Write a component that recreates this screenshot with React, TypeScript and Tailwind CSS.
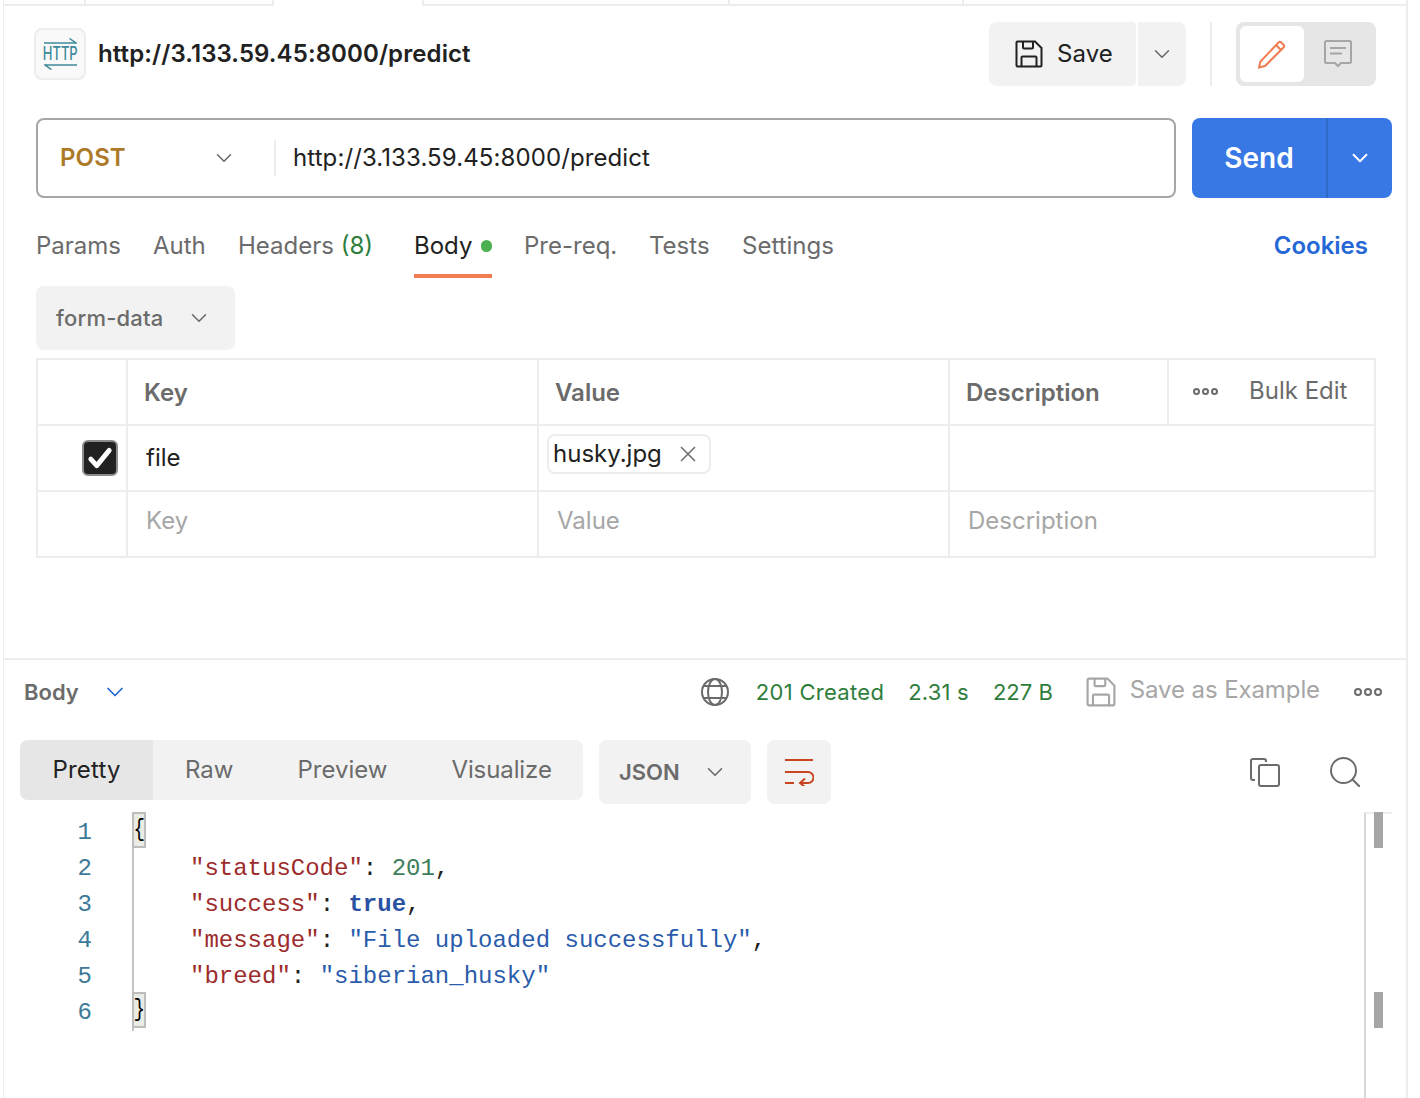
import { ChevronDown } from "lucide-react";

const ui = "font-['Inter','Liberation_Sans',sans-serif]";

const requestTabs = [
  { label: "Params", width: "w-[84px]" },
  { label: "Auth", width: "w-[52px]" },
];

function SaveIcon({ className }: { className?: string }) {
  return (
    <svg viewBox="0 0 28 28" fill="none" stroke="currentColor" strokeWidth="2" className={className}>
      <path d="M1.5 2.5a1 1 0 0 1 1-1H20l6.5 6.5v17.500a1 1 0 0 1-1 1h-23a1 1 0 0 1-1-1z" />
      <path d="M8 1.500v6a1 1 0 0 0 1 1h8a1 1 0 0 0 1-1v-6" />
      <path d="M6.500 26.500v-9a1 1 0 0 1 1-1h13a1 1 0 0 1 1 1v9" />
    </svg>
  );
}

function HttpIcon() {
  return (
    <div className="flex h-[52px] w-[52px] flex-col items-center justify-center rounded-[8px] border-2 border-[#ededed] bg-[#f9f9f9] text-[#3d8a9a]">
      <svg viewBox="0 0 33 6" className="h-[6px] w-[33px]" fill="none" stroke="currentColor" strokeWidth="1.500">
        <path d="M0 5h32L25.500 .5" />
      </svg>
      <span className="my-[1px] scale-x-[0.72] text-[18px] leading-[18px] font-medium">HTTP</span>
      <svg viewBox="0 0 33 6" className="h-[6px] w-[33px]" fill="none" stroke="currentColor" strokeWidth="1.500">
        <path d="M33 1H1l6.500 4.500" />
      </svg>
    </div>
  );
}

function MoreDots({ size }: { size: string }) {
  return (
    <>
      <i className={`${size} rounded-full border-2 border-[#6b6b6b]`} />
      <i className={`${size} rounded-full border-2 border-[#6b6b6b]`} />
      <i className={`${size} rounded-full border-2 border-[#6b6b6b]`} />
    </>
  );
}

function TableCell({ className, children }: { className: string; children?: React.ReactNode }) {
  return <div className={`flex items-center border-r-2 border-[#ededed] last:border-r-0 ${className}`}>{children}</div>;
}

function CodeLine({ children }: { children: React.ReactNode }) {
  return <div className="h-[36px] pt-[3px] pl-[56px]">{children}</div>;
}

function MatchedBrace({ children }: { children: string }) {
  return (
    <div className="-ml-[2px] flex h-[36px] w-[14px] justify-center border-2 border-[#bdbdbd] bg-[#e8ece4] text-[24px] leading-[32px] text-black">
      <span className="scale-x-[0.8]">{children}</span>
    </div>
  );
}

export default function App() {
  return (
    <div className={`${ui} relative h-[1098px] w-[1420px] overflow-hidden bg-white text-[24px] text-[#212121]`}>
      {/* tab strip remnants along the top */}
      <div className="flex h-[6px] pl-[4px]">
        <div className="w-[82px] border-r-2 border-b-2 border-[#ededed]" />
        <div className="w-[188px] border-r-2 border-b-2 border-[#ededed]" />
        <div className="w-[150px] border-r-2 border-[#ededed]" />
        <div className="w-[306px] border-r-2 border-b-2 border-[#ededed]" />
        <div className="w-[234px] border-r-2 border-b-2 border-[#ededed]" />
        <div className="w-[442px] border-b-2 border-[#ededed]" />
      </div>

      <div className="absolute top-0 bottom-0 left-[3px] w-[1px] bg-[#ededed]" />
      <div className="absolute top-0 bottom-0 left-[1406px] w-[2px] bg-[#ededed]" />

      {/* request title */}
      <div className="mt-[16px] flex h-[64px] items-center pr-[44px] pl-[34px]">
        <HttpIcon />
        <div className="ml-[12px] text-[24px] font-semibold tracking-[0.1px]">http://3.133.59.45:8000/predict</div>
        <div className="ml-auto flex h-[64px] w-[147px] items-center gap-[14px] rounded-l-[8px] rounded-r-[4px] bg-[#f2f2f2] pl-[26px]">
          <SaveIcon className="h-[28px] w-[28px]" />
          <span className="text-[24px] tracking-[0.1px]">Save</span>
        </div>
        <div className="ml-[2px] flex h-[64px] w-[48px] items-center justify-center rounded-r-[8px] bg-[#f2f2f2] text-[#6b6b6b]">
          <ChevronDown className="h-[26px] w-[26px]" strokeWidth={1.500} />
        </div>
        <div className="mx-[24px] h-[64px] w-[2px] bg-[#ededed]" />
        <div className="flex h-[64px] w-[140px] rounded-[8px] bg-[#e6e6e6] p-[4px]">
          <div className="flex w-[64px] items-center justify-center rounded-[6px] bg-white text-[#f07c4f]">
            <svg viewBox="0 0 30 30" className="h-[30px] w-[30px]" fill="none" stroke="currentColor" strokeWidth="2">
              <path d="M2 28.500l1.500-6L21.500 3.500a2 2 0 0 1 2.800 0l2.200 2.200a2 2 0 0 1 0 2.800L8 27z M2 28.500l6-1.500 M19 6l5.500 5.500" />
            </svg>
          </div>
          <div className="flex flex-1 items-center justify-center text-[#a6a6a6]">
            <svg viewBox="0 0 28 28" className="h-[28px] w-[28px]" fill="none" stroke="currentColor" strokeWidth="2">
              <path d="M2.500 1h23A1.500 1.500 0 0 1 27 2.500v19a1.500 1.500 0 0 1-1.500 1.500H17l-3 3-3-3H2.500A1.500 1.500 0 0 1 1 21.500v-19A1.500 1.500 0 0 1 2.500 1z" />
              <path d="M6 8h16M6 13.500h12" />
            </svg>
          </div>
        </div>
      </div>

      {/* url bar */}
      <div className="mt-[32px] flex h-[80px] pr-[28px] pl-[36px]">
        <div className="flex flex-1 items-center rounded-[8px] border-2 border-[#a6a6a6]">
          <div className="flex w-[236px] items-center justify-between pr-[37px] pl-[22px]">
            <span className="font-semibold tracking-[0.1px] text-[#ad7a29]">POST</span>
            <ChevronDown className="h-[26px] w-[26px] text-[#6b6b6b]" strokeWidth={1.500} />
          </div>
          <div className="h-[36px] w-[2px] bg-[#ededed]" />
          <div className="ml-[17px] tracking-[0.1px]">http://3.133.59.45:8000/predict</div>
        </div>
        <div className="ml-[16px] flex w-[200px] rounded-[8px] bg-[#3878e4] text-white">
          <div className="flex w-[136px] items-center justify-center border-r-2 border-[#2f6ac9] text-[28px] font-semibold">Send</div>
          <div className="flex flex-1 items-center justify-center">
            <ChevronDown className="h-[26px] w-[26px]" strokeWidth={1.750} />
          </div>
        </div>
      </div>

      {/* request tabs */}
      <div className="mt-[32px] flex h-[48px] items-start pr-[52px] pl-[36px] leading-[32px] text-[#6b6b6b]">
        {requestTabs.map((tab) => (
          <div key={tab.label} className={`${tab.width} mr-[33px]`}>{tab.label}</div>
        ))}
        <div className="mr-[41px] w-[135px] whitespace-nowrap">
          Headers <span className="text-[#2f7d3c]">(8)</span>
        </div>
        <div className="mr-[32px] flex h-[48px] w-[78px] items-start gap-[9px] border-b-4 border-[#f07c4f] text-[#212121]">
          Body
          <span className="mt-[10px] h-[12px] w-[12px] rounded-full bg-[#4caf50]" />
        </div>
        <div className="mr-[33px] w-[92px] whitespace-nowrap">Pre-req.</div>
        <div className="mr-[33px] w-[60px]">Tests</div>
        <div>Settings</div>
        <div className="ml-auto font-semibold text-[#2467d6]">Cookies</div>
      </div>

      {/* body type */}
      <div className="mt-[8px] ml-[36px] flex h-[64px] w-[199px] items-center justify-between rounded-[8px] bg-[#f2f2f2] pr-[23px] pl-[20px] text-[22px] font-medium tracking-[0.2px] text-[#6b6b6b]">
        form-data
        <ChevronDown className="h-[26px] w-[26px]" strokeWidth={1.500} />
      </div>

      {/* form table */}
      <div className="mt-[8px] ml-[36px] w-[1340px] border-2 border-[#ededed]">
        <div className="flex h-[66px] border-b-2 border-[#ededed] font-semibold text-[#6b6b6b]">
          <TableCell className="w-[90px]" />
          <TableCell className="w-[411px] pt-[2px] pl-[16px]">Key</TableCell>
          <TableCell className="w-[411px] pt-[2px] pl-[16px]">Value</TableCell>
          <TableCell className="w-[219px] pt-[2px] pl-[16px]">Description</TableCell>
          <TableCell className="flex-1 pb-[2px] pl-[24px] font-normal">
            <span className="flex w-[56px] gap-[2px]">
              <MoreDots size="h-[7px] w-[7px]" />
            </span>
            Bulk Edit
          </TableCell>
        </div>
        <div className="flex h-[66px] border-b-2 border-[#ededed]">
          <TableCell className="w-[90px] justify-end pr-[8px]">
            <div className="flex h-[36px] w-[36px] items-center justify-center rounded-[6px] border-2 border-[#8c8c8c] bg-[#212121]">
              <svg viewBox="0 0 24 24" className="h-[26px] w-[26px]" fill="none" stroke="#fff" strokeWidth="4.500" strokeLinecap="round" strokeLinejoin="round">
                <path d="M3.500 13l5.500 6L20.500 5" />
              </svg>
            </div>
          </TableCell>
          <TableCell className="w-[411px] pl-[18px]">file</TableCell>
          <TableCell className="w-[411px] items-start pt-[8px] pl-[8px]">
            <div className="flex h-[40px] items-center gap-[18px] rounded-[8px] border-2 border-[#ededed] pr-[13px] pl-[4px]">
              husky.jpg
              <svg viewBox="0 0 16 16" className="h-[16px] w-[16px]" fill="none" stroke="#6b6b6b" strokeWidth="1.500">
                <path d="M1 1l14 14M15 1L1 15" />
              </svg>
            </div>
          </TableCell>
          <TableCell className="flex-1" />
        </div>
        <div className="flex h-[64px] text-[#a6a6a6]">
          <TableCell className="w-[90px]" />
          <TableCell className="w-[411px] pb-[6px] pl-[18px]">Key</TableCell>
          <TableCell className="w-[411px] pb-[6px] pl-[18px]">Value</TableCell>
          <TableCell className="flex-1 pb-[6px] pl-[18px]">Description</TableCell>
        </div>
      </div>

      {/* response */}
      <div className="mt-[100px] mr-[14px] ml-[4px] flex h-[66px] items-center border-t-2 border-[#ededed] pr-[24px] pl-[20px]">
        <span className="text-[22px] font-semibold text-[#6b6b6b]">Body</span>
        <ChevronDown className="ml-[22px] h-[28px] w-[28px] text-[#2467d6]" strokeWidth={1.500} />
        <svg viewBox="0 0 30 30" className="ml-auto h-[30px] w-[30px]" fill="none" stroke="#6b6b6b" strokeWidth="2">
          <circle cx="15" cy="15" r="13" />
          <ellipse cx="15" cy="15" rx="7" ry="13" />
          <path d="M3.500 9h23M3.500 21h23" />
        </svg>
        <span className="ml-[26px] text-[22px] tracking-[0.3px] text-[#2f7d3c]">201 Created</span>
        <span className="ml-[24px] text-[22px] tracking-[0.2px] text-[#2f7d3c]">2.31 s</span>
        <span className="ml-[24px] text-[22px] text-[#2f7d3c]">227 B</span>
        <SaveIcon className="ml-[33px] h-[30px] w-[30px] text-[#a6a6a6]" />
        <span className="relative -top-[2px] ml-[14px] tracking-[-0.1px] text-[#a6a6a6]">Save as Example</span>
        <span className="ml-[34px] flex gap-[2px]">
          <MoreDots size="h-[8px] w-[8px]" />
        </span>
      </div>

      <div className="mt-[16px] flex items-start pr-[60px] pl-[20px]">
        <div className="flex h-[60px] w-[563px] overflow-hidden rounded-[8px] bg-[#f2f2f2] text-[#6b6b6b]">
          <div className="flex w-[133px] items-center justify-center bg-[#e6e6e6] tracking-[0.2px] text-[#212121]">Pretty</div>
          <div className="ml-[32px] flex items-center">Raw</div>
          <div className="ml-[64px] flex items-center">Preview</div>
          <div className="ml-[64px] flex items-center tracking-[-0.1px]">Visualize</div>
        </div>
        <div className="ml-[16px] flex h-[64px] w-[152px] items-center justify-between rounded-[8px] bg-[#f2f2f2] pr-[23px] pl-[20px] text-[22px] font-semibold text-[#6b6b6b]">
          JSON
          <ChevronDown className="h-[26px] w-[26px]" strokeWidth={1.500} />
        </div>
        <div className="ml-[16px] flex h-[64px] w-[64px] items-center justify-center rounded-[8px] bg-[#f2f2f2]">
          <svg viewBox="0 0 30 28" className="h-[28px] w-[30px]" fill="none" stroke="#c8451f" strokeWidth="2">
            <path d="M1 2h28M1 14h23a4.500 4.500 0 0 1 0 11H16M21 20.500L16 25l5 4M1 25h9" />
          </svg>
        </div>
        <svg viewBox="0 0 30 30" className="mt-[17px] ml-auto h-[30px] w-[30px]" fill="none" stroke="#6b6b6b" strokeWidth="2">
          <rect x="9" y="8" width="20" height="21" rx="2" />
          <path d="M5 23H3a2 2 0 0 1-2-2V4a2 2 0 0 1 2-2h11a2 2 0 0 1 2 2v1" />
        </svg>
        <svg viewBox="0 0 30 30" className="mt-[17px] ml-[50px] h-[30px] w-[30px]" fill="none" stroke="#6b6b6b" strokeWidth="2">
          <circle cx="13.500" cy="13.500" r="12.500" />
          <path d="M22.500 22.500L30 30" />
        </svg>
      </div>

      {/* response code */}
      <div className="relative mt-[8px] flex font-['Liberation_Mono',monospace] text-[24px] leading-[36px]">
        <div className="w-[92px] pt-[3px] pl-[4px] text-right text-[#3c7a96]">
          <div>1</div>
          <div>2</div>
          <div>3</div>
          <div>4</div>
          <div>5</div>
          <div>6</div>
        </div>
        <div className="ml-[40px] border-l-[2px] border-[#c4c4c4] whitespace-pre">
          <MatchedBrace>{"{"}</MatchedBrace>
          <CodeLine><span className="text-[#9c2b2b]">"statusCode"</span>: <span className="text-[#3d7d5a]">201</span>,</CodeLine>
          <CodeLine><span className="text-[#9c2b2b]">"success"</span>: <span className="font-bold text-[#2a52a3]">true</span>,</CodeLine>
          <CodeLine><span className="text-[#9c2b2b]">"message"</span>: <span className="text-[#2a5cab]">"File uploaded successfully"</span>,</CodeLine>
          <CodeLine><span className="text-[#9c2b2b]">"breed"</span>: <span className="text-[#2a5cab]">"siberian_husky"</span></CodeLine>
          <MatchedBrace>{"}"}</MatchedBrace>
        </div>
        {/* overview ruler */}
        <div className="absolute top-0 left-[1364px] h-[300px] w-[28px] border-t-2 border-l-2 border-t-[#ededed] border-l-[#d9d9d9]" />
        <div className="absolute top-0 left-[1374px] h-[36px] w-[9px] bg-[#a6a6a6]" />
        <div className="absolute top-[180px] left-[1374px] h-[36px] w-[9px] bg-[#a6a6a6]" />
      </div>
    </div>
  );
}
